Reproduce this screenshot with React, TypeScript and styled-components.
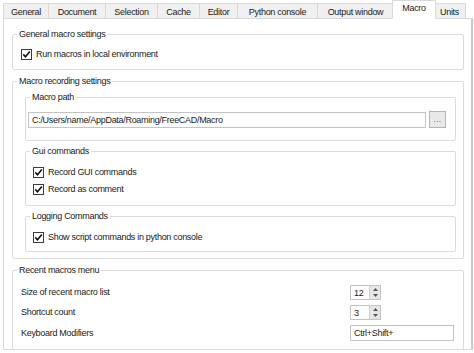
import React from 'react';
import styled, { createGlobalStyle } from 'styled-components';

const GlobalStyle = createGlobalStyle`
  html, body {
    margin: 0;
    padding: 0;
    background: #ffffff;
  }
  body {
    font-family: 'Liberation Sans', Arial, sans-serif;
    font-size: 9px;
    letter-spacing: -0.3px;
    color: #1a1a1a;
  }
`;

interface TabInfo {
  label: string;
  width: number;
}

const tabs: TabInfo[] = [
  { label: 'General', width: 46 },
  { label: 'Document', width: 57 },
  { label: 'Selection', width: 52 },
  { label: 'Cache', width: 42 },
  { label: 'Editor', width: 38 },
  { label: 'Python console', width: 80 },
  { label: 'Output window', width: 76 },
  { label: 'Macro', width: 44 },
  { label: 'Units', width: 32 },
];

const Window = styled.div`
  width: 474px;
  height: 353px;
  display: flex;
  flex-direction: column;
  overflow: hidden;
`;

const TabBar = styled.div`
  display: flex;
  align-items: flex-end;
  height: 19px;
  padding-left: 3px;
  position: relative;
  z-index: 1;
`;

const Tab = styled.div<{ $w: number; $active?: boolean }>`
  box-sizing: border-box;
  width: ${(p) => p.$w}px;
  height: ${(p) => (p.$active ? 19 : 16)}px;
  margin: ${(p) => (p.$active ? '0 -2px' : '0')};
  display: flex;
  align-items: center;
  justify-content: center;
  padding-top: ${(p) => (p.$active ? 0 : 1)}px;
  padding-bottom: ${(p) => (p.$active ? 3 : 0)}px;
  background: ${(p) => (p.$active ? '#ffffff' : '#f0f0f0')};
  border: 1px solid #d9d9d9;
  border-bottom: ${(p) => (p.$active ? '1px solid #ffffff' : '1px solid #d9d9d9')};
  border-left-width: ${(p) => (p.$active ? 1 : 0)}px;
  position: relative;
  z-index: ${(p) => (p.$active ? 2 : 0)};
  white-space: nowrap;
  &:first-child {
    border-left-width: 1px;
  }
`;

const Pane = styled.div`
  box-sizing: border-box;
  margin: -1px 1px 0 3px;
  height: 332px;
  border: 1px solid #d9d9d9;
  border-right: 2px solid #c9c9c9;
  background: #ffffff;
  padding: 9px 7px 0 8px;
  display: flex;
  flex-direction: column;
  gap: 5px;
`;

const Group = styled.fieldset`
  margin: 0;
  padding: 0;
  min-width: 0;
  border: 1px solid #dcdcdc;
  border-radius: 2px;
`;

const Legend = styled.legend`
  margin-left: 4px;
  padding: 0 2px;
  line-height: 12px;
  height: 12px;
`;

const Body = styled.div<{ $pad: string; $gap?: number }>`
  padding: ${(p) => p.$pad};
  display: flex;
  flex-direction: column;
  gap: ${(p) => p.$gap ?? 0}px;
`;

const CheckRow = styled.label`
  display: flex;
  align-items: center;
  gap: 4px;
  height: 16px;
`;

const Box = styled.span`
  box-sizing: border-box;
  width: 11px;
  height: 11px;
  border: 1px solid #3c3c3c;
  background: #ffffff;
  display: flex;
  align-items: center;
  justify-content: center;
`;

const PathRow = styled.div`
  display: flex;
  align-items: center;
  gap: 3px;
`;

const LineEdit = styled.div<{ $w?: number }>`
  box-sizing: border-box;
  height: 16px;
  flex: ${(p) => (p.$w ? 'none' : '1')};
  width: ${(p) => (p.$w ? `${p.$w}px` : 'auto')};
  border: 1px solid #c4c4c4;
  background: #ffffff;
  padding: 0 3px;
  display: flex;
  align-items: center;
  white-space: nowrap;
`;

const DotsButton = styled.div`
  box-sizing: border-box;
  width: 17px;
  height: 17px;
  border: 1px solid #b4b4b4;
  background: #e8e8e8;
  display: flex;
  align-items: center;
  justify-content: center;
  font-size: 8px;
  color: #444;
  letter-spacing: 0.5px;
`;

const FormGrid = styled.div`
  display: grid;
  grid-template-columns: 1fr 104px;
  row-gap: 5px;
  align-items: center;
`;

const FormLabel = styled.span`
  line-height: 15px;
`;

const SpinBox = styled.div`
  box-sizing: border-box;
  width: 31px;
  height: 15px;
  border: 1px solid #c4c4c4;
  display: flex;
  background: #ffffff;
`;

const SpinValue = styled.span`
  flex: 1;
  padding-left: 3px;
  display: flex;
  align-items: center;
`;

const SpinButtons = styled.div`
  width: 10px;
  display: flex;
  flex-direction: column;
  background: #e6e6e6;
  border-left: 1px solid #cfcfcf;
`;

const SpinHalf = styled.div`
  flex: 1;
  display: flex;
  align-items: center;
  justify-content: center;
`;

const Check: React.FC<{ label: string }> = ({ label }) => (
  <CheckRow>
    <Box>
      <svg width="9" height="9" viewBox="0 0 9 9">
        <path d="M1.3 4.4 L3.5 6.7 L7.8 1.6" fill="none" stroke="#111" strokeWidth="1.6" />
      </svg>
    </Box>
    <span>{label}</span>
  </CheckRow>
);

const Spin: React.FC<{ value: string }> = ({ value }) => (
  <SpinBox>
    <SpinValue>{value}</SpinValue>
    <SpinButtons>
      <SpinHalf>
        <svg width="5" height="3" viewBox="0 0 5 3">
          <path d="M0 3 L2.5 0 L5 3 Z" fill="#555" />
        </svg>
      </SpinHalf>
      <SpinHalf>
        <svg width="5" height="3" viewBox="0 0 5 3">
          <path d="M0 0 L2.5 3 L5 0 Z" fill="#555" />
        </svg>
      </SpinHalf>
    </SpinButtons>
  </SpinBox>
);

const App: React.FC = () => {
  return (
    <Window>
      <GlobalStyle />
      <TabBar>
        {tabs.map((t) => (
          <Tab key={t.label} $w={t.width} $active={t.label === 'Macro'}>
            {t.label}
          </Tab>
        ))}
      </TabBar>
      <Pane>
        <Group>
          <Legend>General macro settings</Legend>
          <Body $pad="6px 8px 7px 8px">
            <Check label="Run macros in local environment" />
          </Body>
        </Group>

        <Group>
          <Legend>Macro recording settings</Legend>
          <Body $pad="4px 7px 6px 12px" $gap={4}>
            <Group>
              <Legend>Macro path</Legend>
              <Body $pad="8px 9px 12px 2px">
                <PathRow>
                  <LineEdit>C:/Users/name/AppData/Roaming/FreeCAD/Macro</LineEdit>
                  <DotsButton>...</DotsButton>
                </PathRow>
              </Body>
            </Group>
            <Group>
              <Legend>Gui commands</Legend>
              <Body $pad="7px 8px 8px 7px" $gap={1}>
                <Check label="Record GUI commands" />
                <Check label="Record as comment" />
              </Body>
            </Group>
            <Group>
              <Legend>Logging Commands</Legend>
              <Body $pad="7px 8px 6px 7px">
                <Check label="Show script commands in python console" />
              </Body>
            </Group>
          </Body>
        </Group>

        <Group>
          <Legend>Recent macros menu</Legend>
          <Body $pad="9px 9px 8px 8px">
            <FormGrid>
              <FormLabel>Size of recent macro list</FormLabel>
              <Spin value="12" />
              <FormLabel>Shortcut count</FormLabel>
              <Spin value="3" />
              <FormLabel>Keyboard Modifiers</FormLabel>
              <LineEdit $w={104}>Ctrl+Shift+</LineEdit>
            </FormGrid>
          </Body>
        </Group>
      </Pane>
    </Window>
  );
};

export default App;
